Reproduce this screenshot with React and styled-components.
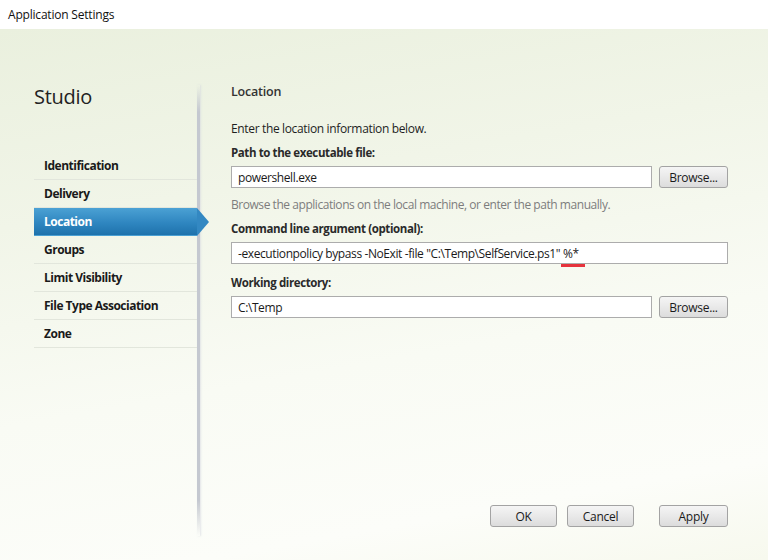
import React from "react";
import styled, { createGlobalStyle } from "styled-components";

const GlobalStyle = createGlobalStyle`
  html, body {
    margin: 0;
    padding: 0;
    background: #ffffff;
  }
  body {
    font-family: "Open Sans", "Noto Sans", "Liberation Sans", sans-serif;
    font-size: 12px;
    color: #1e1e1e;
  }
`;

const Window = styled.div`
  width: 768px;
  height: 560px;
  display: flex;
  flex-direction: column;
  overflow: hidden;
`;

const TitleBar = styled.div`
  height: 29px;
  display: flex;
  align-items: center;
  padding-left: 8px;
  background: #ffffff;
  font-size: 12px;
  color: #111;
  letter-spacing: -0.2px;
`;

const Body = styled.div`
  flex: 1;
  display: flex;
  background: linear-gradient(170deg, #eaf0de 0%, #f1f5e8 30%, #f9fbf4 60%, #fcfdf9 85%, #f7f9ee 100%);
`;

const Sidebar = styled.div`
  width: 163px;
  padding: 54px 0 0 34px;
  display: flex;
  flex-direction: column;
`;

const Product = styled.div`
  font-size: 20px;
  line-height: 28px;
  color: #222;
  letter-spacing: -0.3px;
  margin-bottom: 41px;
`;

const NavList = styled.div`
  display: flex;
  flex-direction: column;
`;

const NavItem = styled.div`
  position: relative;
  height: 28px;
  display: flex;
  align-items: center;
  padding-left: 10px;
  font-weight: 700;
  font-size: 12px;
  letter-spacing: -0.5px;
  color: ${(p) => (p.$active ? "#ffffff" : "#1a1a1a")};
  background: ${(p) =>
    p.$active ? "linear-gradient(#4ba1d4, #2f86c0 55%, #1e72ac)" : "transparent"};
  border-bottom: 1px solid ${(p) => (p.$active ? "transparent" : "#e2e6dc")};
  box-sizing: border-box;

  &::after {
    content: "";
    display: ${(p) => (p.$active ? "block" : "none")};
    position: absolute;
    right: -12px;
    top: 0;
    border-top: 14px solid transparent;
    border-bottom: 14px solid transparent;
    border-left: 12px solid #3388c2;
  }
`;

const Divider = styled.div`
  width: 3px;
  margin: 56px 0 24px 0;
  background: linear-gradient(
    to bottom,
    rgba(190, 194, 204, 0) 0%,
    #c4c8d0 6%,
    #c4c8d0 92%,
    rgba(190, 194, 204, 0) 100%
  );
  box-shadow: 1px 0 2px rgba(210, 214, 222, 0.6);
`;

const Content = styled.div`
  flex: 1;
  display: flex;
  flex-direction: column;
  padding: 54px 40px 33px 31px;
`;

const Heading = styled.div`
  font-size: 12.5px;
  font-weight: 600;
  color: #333;
  line-height: 18px;
  letter-spacing: -0.2px;
  margin-bottom: 19px;
`;

const Text = styled.div`
  line-height: 18px;
  letter-spacing: ${(p) => (p.$muted ? "-0.45px" : "-0.35px")};
  color: ${(p) => (p.$muted ? "#7d7d7d" : "#1e1e1e")};
  margin-bottom: ${(p) => p.$mb || 0}px;
`;

const Label = styled.div`
  font-weight: 700;
  font-size: 11.5px;
  line-height: 18px;
  letter-spacing: -0.4px;
  color: #2a2a2a;
  margin-bottom: 4px;
`;

const FieldRow = styled.div`
  display: flex;
  gap: 7px;
  margin-bottom: ${(p) => p.$mb || 0}px;
`;

const Field = styled.div`
  flex: 1;
  height: 22px;
  box-sizing: border-box;
  border: 1px solid #acacac;
  background: #ffffff;
  display: flex;
  align-items: center;
  padding-left: 6px;
  letter-spacing: -0.4px;
  color: #1a1a1a;
  white-space: nowrap;
`;

const Marked = styled.span`
  position: relative;

  &::after {
    content: "";
    position: absolute;
    left: -2px;
    right: -6px;
    bottom: -5px;
    height: 3px;
    background: #e6333d;
  }
`;

const Button = styled.button`
  width: ${(p) => p.$w || 69}px;
  height: 22px;
  box-sizing: border-box;
  border: 1px solid #a3a3a3;
  border-radius: 3px;
  background: linear-gradient(#f5f5f5, #e9e9e9 50%, #dcdcdc);
  font-family: inherit;
  font-size: 12px;
  letter-spacing: -0.3px;
  color: #1a1a1a;
  padding: 0;
  flex-shrink: 0;
`;

const Footer = styled.div`
  margin-top: auto;
  display: flex;
  justify-content: flex-end;
  gap: 10px;
`;

const Spacer = styled.div`
  width: 5px;
`;

const navItems = [
  "Identification",
  "Delivery",
  "Location",
  "Groups",
  "Limit Visibility",
  "File Type Association",
  "Zone",
];

export default function App() {
  return (
    <Window>
      <GlobalStyle />
      <TitleBar>Application Settings</TitleBar>
      <Body>
        <Sidebar>
          <Product>Studio</Product>
          <NavList>
            {navItems.map((item) => (
              <NavItem key={item} $active={item === "Location"}>
                {item}
              </NavItem>
            ))}
          </NavList>
        </Sidebar>
        <Divider />
        <Content>
          <Heading>Location</Heading>
          <Text $mb={6}>Enter the location information below.</Text>
          <Label>Path to the executable file:</Label>
          <FieldRow $mb={8}>
            <Field>powershell.exe</Field>
            <Button>Browse...</Button>
          </FieldRow>
          <Text $muted $mb={6}>
            Browse the applications on the local machine, or enter the path manually.
          </Text>
          <Label>Command line argument (optional):</Label>
          <FieldRow $mb={10}>
            <Field>
              -executionpolicy bypass -NoExit -file "C:\Temp\SelfService.ps1"&nbsp;
              <Marked>%*</Marked>
            </Field>
          </FieldRow>
          <Label>Working directory:</Label>
          <FieldRow>
            <Field>C:\Temp</Field>
            <Button>Browse...</Button>
          </FieldRow>
          <Footer>
            <Button $w={67}>OK</Button>
            <Button $w={67}>Cancel</Button>
            <Spacer />
            <Button>Apply</Button>
          </Footer>
        </Content>
      </Body>
    </Window>
  );
}
